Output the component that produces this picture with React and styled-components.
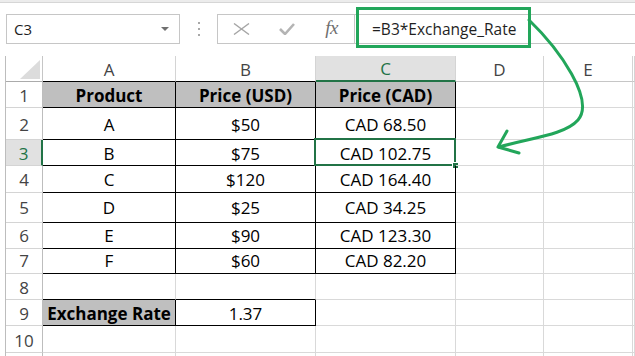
import React from "react";
import styled, { createGlobalStyle, css } from "styled-components";

const GREEN = "#217346";
const MARK = "#22a65a";
const GRID = "#d9d9d9";
const HEAD_LINE = "#c6c6c6";

const GlobalStyle = createGlobalStyle`
  html, body { margin: 0; padding: 0; background: #ffffff; }
  body { font-family: "Open Sans", "Noto Sans", sans-serif; }
`;

const Page = styled.div`
  position: relative;
  width: 635px;
  height: 356px;
  overflow: hidden;
  background: #ffffff;
`;

const TopEdge = styled.div`
  height: 2px;
  background: #ececec;
  border-bottom: 1px solid #d6d6d6;
`;

const FormulaBar = styled.div`
  display: flex;
  height: 30px;
  margin-top: 11px;
  padding-left: 6px;
`;

const NameBox = styled.div`
  box-sizing: border-box;
  width: 174px;
  border: 1px solid ${HEAD_LINE};
  display: flex;
  align-items: center;
  justify-content: space-between;
  padding: 0 10px 0 7px;
  font-size: 15px;
  color: #1f1f1f;
`;

const Caret = styled.span`
  width: 0;
  height: 0;
  border-left: 4px solid transparent;
  border-right: 4px solid transparent;
  border-top: 4px solid #707070;
`;

const Grip = styled.div`
  width: 37px;
  display: flex;
  flex-direction: column;
  align-items: center;
  justify-content: center;
  gap: 4px;
`;

const GripDot = styled.span`
  width: 2px;
  height: 2px;
  background: #a8a8a8;
`;

const ButtonBox = styled.div`
  box-sizing: border-box;
  width: 138px;
  border: 1px solid ${HEAD_LINE};
  display: flex;
  padding-left: 1px;
`;

const BarButton = styled.div`
  width: 45px;
  display: flex;
  align-items: center;
  justify-content: center;
`;

const FxLabel = styled.span`
  font-family: "Liberation Serif", "DejaVu Serif", serif;
  font-style: italic;
  font-size: 19px;
  color: #6f6f6f;
  letter-spacing: -0.5px;
  margin-top: -2px;
`;

const FormulaField = styled.div`
  flex: 1;
  box-sizing: border-box;
  border-top: 1px solid ${HEAD_LINE};
  border-bottom: 1px solid ${HEAD_LINE};
  display: flex;
  align-items: center;
  padding-left: 17px;
  font-size: 15.5px;
  color: #1f1f1f;
  white-space: nowrap;
`;

const Sheet = styled.div`
  margin-top: 12px;
  margin-left: 5px;
  border-left: 1px solid #bdbdbd;
  display: grid;
  grid-template-columns: 37px 133px 140px 140px 88px 89px 1fr;
  grid-template-rows: ${(p) => p.$rows};
`;

const Corner = styled.div`
  position: relative;
  box-sizing: border-box;
  border-right: 1px solid ${HEAD_LINE};
  border-bottom: 1px solid #ababab;
  &::after {
    content: "";
    position: absolute;
    right: 2px;
    bottom: 2px;
    width: 20px;
    height: 19px;
    background: #dcdcdc;
    clip-path: polygon(100% 0, 100% 100%, 0 100%);
  }
`;

const ColHead = styled.div`
  box-sizing: border-box;
  display: flex;
  align-items: flex-end;
  justify-content: center;
  font-size: 17px;
  color: #444444;
  border-right: 1px solid #d4d4d4;
  border-bottom: 1px solid ${(p) => p.$under || "#c6c6c6"};
  ${(p) =>
    p.$active &&
    css`
      background: #e1e1e1;
      color: ${GREEN};
      border-bottom: 2px solid ${GREEN};
    `}
`;

const RowHead = styled.div`
  box-sizing: border-box;
  display: flex;
  align-items: flex-end;
  justify-content: center;
  padding-bottom: ${(p) => p.$pad}px;
  font-size: 17px;
  color: #444444;
  border-right: 1px solid #bdbdbd;
  border-bottom: 1px solid #d4d4d4;
  ${(p) =>
    p.$active &&
    css`
      background: #e1e1e1;
      color: ${GREEN};
      border-right: 2px solid ${GREEN};
    `}
`;

const Cell = styled.div`
  position: relative;
  box-sizing: border-box;
  display: flex;
  align-items: flex-end;
  justify-content: center;
  padding-bottom: ${(p) => p.$pad}px;
  font-size: 17px;
  color: #000000;
  white-space: nowrap;
  font-weight: ${(p) => (p.$bold ? 700 : 400)};
  background: ${(p) => (p.$fill ? "#bfbfbf" : "transparent")};
  border-right: 1px solid ${(p) => (p.$right ? "#000000" : GRID)};
  border-bottom: 1px solid ${(p) => (p.$bottom ? "#000000" : GRID)};
`;

const Selection = styled.div`
  position: absolute;
  left: -2px;
  top: -2px;
  right: -1px;
  bottom: -1px;
  border: 2px solid ${GREEN};
  pointer-events: none;
`;

const FillHandle = styled.span`
  position: absolute;
  right: -5px;
  bottom: -5px;
  width: 5px;
  height: 5px;
  background: ${GREEN};
  border: 1px solid #ffffff;
`;

const Highlight = styled.div`
  position: absolute;
  left: 356px;
  top: 7px;
  width: 175px;
  height: 41px;
  box-sizing: border-box;
  border: 3px solid ${MARK};
  pointer-events: none;
`;

const Pointer = styled.svg`
  position: absolute;
  left: 0;
  top: 0;
  pointer-events: none;
`;

// the last column is only a sliver at the window edge, so it carries no letter
const columns = ["A", "B", "C", "D", "E", ""];

const rows = [
  { n: 1, h: 26, pad: 0, cells: ["Product", "Price (USD)", "Price (CAD)"], header: true },
  { n: 2, h: 32, pad: 3, cells: ["A", "$50", "CAD 68.50"] },
  { n: 3, h: 26, pad: 0, cells: ["B", "$75", "CAD 102.75"], active: true },
  { n: 4, h: 27, pad: 1, cells: ["C", "$120", "CAD 164.40"] },
  { n: 5, h: 30, pad: 3, cells: ["D", "$25", "CAD 34.25"] },
  { n: 6, h: 26, pad: 1, cells: ["E", "$90", "CAD 123.30"] },
  { n: 7, h: 25, pad: 1, cells: ["F", "$60", "CAD 82.20"] },
  { n: 8, h: 26, pad: 0, cells: [] },
  { n: 9, h: 26, pad: 0, cells: ["Exchange Rate", "1.37"], rate: true },
  { n: 10, h: 27, pad: 0, cells: [] },
  { n: 11, h: 26, pad: 0, cells: [], clipped: true },
];

// border + fill rules for one data cell
function cellStyle(row, col) {
  const inTable = row.n <= 7 && col < 3;
  const inRate = row.n === 9 && col < 2;
  return {
    right: inTable || inRate,
    bottom: inTable || inRate || (row.n === 8 && col < 2),
    bold: row.header || (row.rate && col === 0),
    fill: (row.header && col < 3) || (row.rate && col === 0),
  };
}

function CrossIcon() {
  return (
    <svg width="17" height="12" viewBox="0 0 17 12">
      <path d="M1 0.5 L16 11.5 M16 0.5 L1 11.5" stroke="#a6a6a6" strokeWidth="1.4" fill="none" />
    </svg>
  );
}

function CheckIcon() {
  return (
    <svg width="16" height="12" viewBox="0 0 16 12">
      <path d="M1 6 L6 11 L15 1" stroke="#b4b4b4" strokeWidth="2.6" fill="none" />
    </svg>
  );
}

export default function App() {
  const template = ["26px", ...rows.map((r) => `${r.h}px`)].join(" ");
  return (
    <Page>
      <GlobalStyle />
      <TopEdge />
      <FormulaBar>
        <NameBox>
          <span>C3</span>
          <Caret />
        </NameBox>
        <Grip>
          <GripDot />
          <GripDot />
          <GripDot />
        </Grip>
        <ButtonBox>
          <BarButton>
            <CrossIcon />
          </BarButton>
          <BarButton>
            <CheckIcon />
          </BarButton>
          <BarButton>
            <FxLabel>fx</FxLabel>
          </BarButton>
        </ButtonBox>
        <FormulaField>=B3*Exchange_Rate</FormulaField>
      </FormulaBar>

      <Sheet $rows={template}>
        <Corner />
        {columns.map((c, i) => (
          <ColHead key={i} $active={c === "C"} $under={i < 2 ? "#000000" : undefined}>
            {c}
          </ColHead>
        ))}
        {rows.map((row) => (
          <React.Fragment key={row.n}>
            <RowHead $active={row.active} $pad={row.pad}>
              {row.clipped ? "" : row.n}
            </RowHead>
            {columns.map((c, col) => {
              const s = cellStyle(row, col);
              return (
                <Cell
                  key={col}
                  $pad={row.pad}
                  $right={s.right}
                  $bottom={s.bottom}
                  $bold={s.bold}
                  $fill={s.fill}
                >
                  {row.cells[col] || ""}
                  {row.active && col === 2 && (
                    <Selection>
                      <FillHandle />
                    </Selection>
                  )}
                </Cell>
              );
            })}
          </React.Fragment>
        ))}
      </Sheet>

      <Highlight />
      <Pointer width="635" height="356" viewBox="0 0 635 356">
        <path
          d="M529 20 C560 50 595 100 578 120 C565 135 530 138 499 147"
          stroke={MARK}
          strokeWidth="3"
          fill="none"
          strokeLinecap="round"
        />
        <path
          d="M507 131 L498 147 L519 153"
          stroke={MARK}
          strokeWidth="3"
          fill="none"
          strokeLinecap="round"
          strokeLinejoin="round"
        />
      </Pointer>
    </Page>
  );
}
